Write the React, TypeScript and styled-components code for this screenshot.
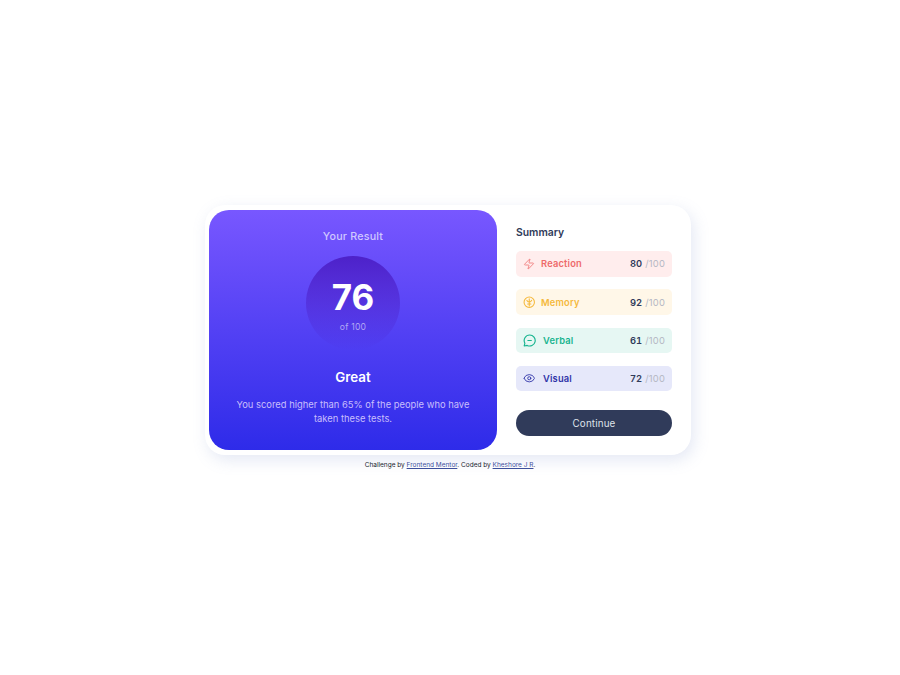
import React from "react";
import styled, { createGlobalStyle } from "styled-components";
import { Zap, Eye } from "lucide-react";

const Global = createGlobalStyle`
  html, body { margin: 0; padding: 0; background: #fff; }
  body { font-family: "Inter", "Lato", sans-serif; }
`;

const Page = styled.main`
  width: 900px;
  height: 675px;
  padding-top: 205px;
  box-sizing: border-box;
  display: flex;
  flex-direction: column;
  align-items: center;
  overflow: hidden;
`;

const Card = styled.section`
  width: 486px;
  height: 250px;
  margin-left: -4px;
  box-sizing: border-box;
  display: flex;
  background: #fff;
  border-radius: 20px;
  box-shadow: 3px 5px 16px rgba(120, 140, 200, 0.2);
`;

const Result = styled.div`
  width: 288px;
  height: 240px;
  margin: 5px 0 0 4px;
  padding-top: 20px;
  box-sizing: border-box;
  border-radius: 20px;
  background: linear-gradient(180deg, #7857ff 0%, #2e2be9 100%);
  display: flex;
  flex-direction: column;
  align-items: center;
  text-align: center;
`;

const ResultTitle = styled.h1`
  margin: 0;
  font-size: 10.7px;
  line-height: 14px;
  font-weight: 500;
  letter-spacing: 0.2px;
  color: #d0c8ff;
`;

const Score = styled.div`
  width: 94px;
  height: 94px;
  margin-top: 12px;
  border-radius: 50%;
  background: linear-gradient(180deg, #4d21c9 0%, rgba(37, 33, 201, 0) 100%);
  display: flex;
  flex-direction: column;
  align-items: center;
`;

const ScoreValue = styled.span`
  margin-top: 19px;
  font-size: 35px;
  line-height: 44px;
  font-weight: 700;
  color: #fff;
`;

const ScoreOf = styled.span`
  margin-top: 2px;
  font-size: 8.6px;
  line-height: 12px;
  letter-spacing: 0.2px;
  color: #b3a8f5;
`;

const Verdict = styled.h2`
  margin: 18px 0 0;
  font-size: 13.4px;
  line-height: 18px;
  font-weight: 600;
  color: #fff;
`;

const Blurb = styled.p`
  margin: 12px 0 0;
  width: 240px;
  font-size: 9.4px;
  line-height: 13.5px;
  font-weight: 400;
  color: #c9bffc;
`;

const Summary = styled.div`
  flex: 1;
  padding: 20px 19px 0;
  display: flex;
  flex-direction: column;
`;

const SummaryTitle = styled.h2`
  margin: 0 0 11px;
  font-size: 10.4px;
  line-height: 15px;
  font-weight: 600;
  color: #303b5a;
`;

const Rows = styled.div`
  display: flex;
  flex-direction: column;
  gap: 12.8px;
`;

const Row = styled.div<{ $bg: string; $fg: string }>`
  height: 25.5px;
  padding: 0 7px 0 6.5px;
  box-sizing: border-box;
  border-radius: 5px;
  background: ${(p) => p.$bg};
  color: ${(p) => p.$fg};
  display: flex;
  align-items: center;
`;

const RowIcon = styled.span`
  width: 13px;
  height: 13px;
  display: flex;
  align-items: center;
  justify-content: center;
`;

const RowLabel = styled.span<{ $gap: number }>`
  margin-left: ${(p) => p.$gap}px;
  font-size: 9.3px;
  font-weight: 600;
  letter-spacing: 0.2px;
`;

const RowScore = styled.span`
  margin-left: auto;
  font-size: 9.4px;
  font-weight: 600;
  font-variant-numeric: tabular-nums;
  color: #303b5a;
`;

const RowMax = styled.span`
  margin-left: 3px;
  font-weight: 400;
  font-variant-numeric: normal;
  letter-spacing: 0.2px;
  color: #b5b8c4;
`;

const Continue = styled.button`
  margin-top: 19px;
  height: 26px;
  border: 0;
  border-radius: 13px;
  background: #303b5a;
  color: #dfe2ea;
  font-family: inherit;
  font-size: 9.8px;
  letter-spacing: 0.15px;
`;

const Credit = styled.footer`
  margin-top: 6px;
  font-family: "Inter", sans-serif;
  font-size: 6.5px;
  line-height: 9px;
  color: #20242e;
`;

const CreditLink = styled.a`
  color: #3d4f9c;
  text-decoration: underline;
`;

const BrainIcon = () => (
  <svg width="12.5" height="12.5" viewBox="0 0 13 13" fill="none" stroke="currentColor" strokeWidth="1.1">
    <circle cx="6.5" cy="6.5" r="5.4" />
    <path d="M6.5 3v7.5M4 4.6l1.2 1.4h2.6L9 4.6M4.8 8.4h3.4" strokeLinecap="round" />
  </svg>
);

const VerbalIcon = () => (
  <svg width="13" height="13" viewBox="0 0 13 13" fill="none" stroke="currentColor" strokeWidth="1.15" strokeLinecap="round" strokeLinejoin="round">
    <path d="M6.7 1a5.5 5.5 0 1 1-2.5 10.4L1.2 12l.7-2.8A5.5 5.5 0 0 1 6.7 1z" />
    <path d="M4.9 6.5h3.4" />
  </svg>
);

const rows = [
  { label: "Reaction", score: 80, bg: "#ffeded", fg: "#ee6a6a", gap: 5.5, icon: <Zap size={12} strokeWidth={1.5} /> },
  { label: "Memory", score: 92, bg: "#fff7e8", fg: "#f5b93c", gap: 5.5, icon: <BrainIcon /> },
  { label: "Verbal", score: 61, bg: "#e6f7f3", fg: "#17b48f", gap: 7.5, icon: <VerbalIcon /> },
  { label: "Visual", score: 72, bg: "#e6e8fa", fg: "#2f33a8", gap: 7.5, icon: <Eye size={12.5} strokeWidth={1.7} /> },
];

export default function App() {
  return (
    <Page>
      <Global />
      <Card>
        <Result>
          <ResultTitle>Your Result</ResultTitle>
          <Score>
            <ScoreValue>76</ScoreValue>
            <ScoreOf>of 100</ScoreOf>
          </Score>
          <Verdict>Great</Verdict>
          <Blurb>You scored higher than 65% of the people who have taken these tests.</Blurb>
        </Result>
        <Summary>
          <SummaryTitle>Summary</SummaryTitle>
          <Rows>
            {rows.map((r) => (
              <Row key={r.label} $bg={r.bg} $fg={r.fg}>
                <RowIcon>{r.icon}</RowIcon>
                <RowLabel $gap={r.gap}>{r.label}</RowLabel>
                <RowScore>
                  {r.score}
                  <RowMax>/100</RowMax>
                </RowScore>
              </Row>
            ))}
          </Rows>
          <Continue>Continue</Continue>
        </Summary>
      </Card>
      <Credit>
        Challenge by <CreditLink href="#">Frontend Mentor</CreditLink>. Coded by <CreditLink href="#">Kheshore J R</CreditLink>.
      </Credit>
    </Page>
  );
}
